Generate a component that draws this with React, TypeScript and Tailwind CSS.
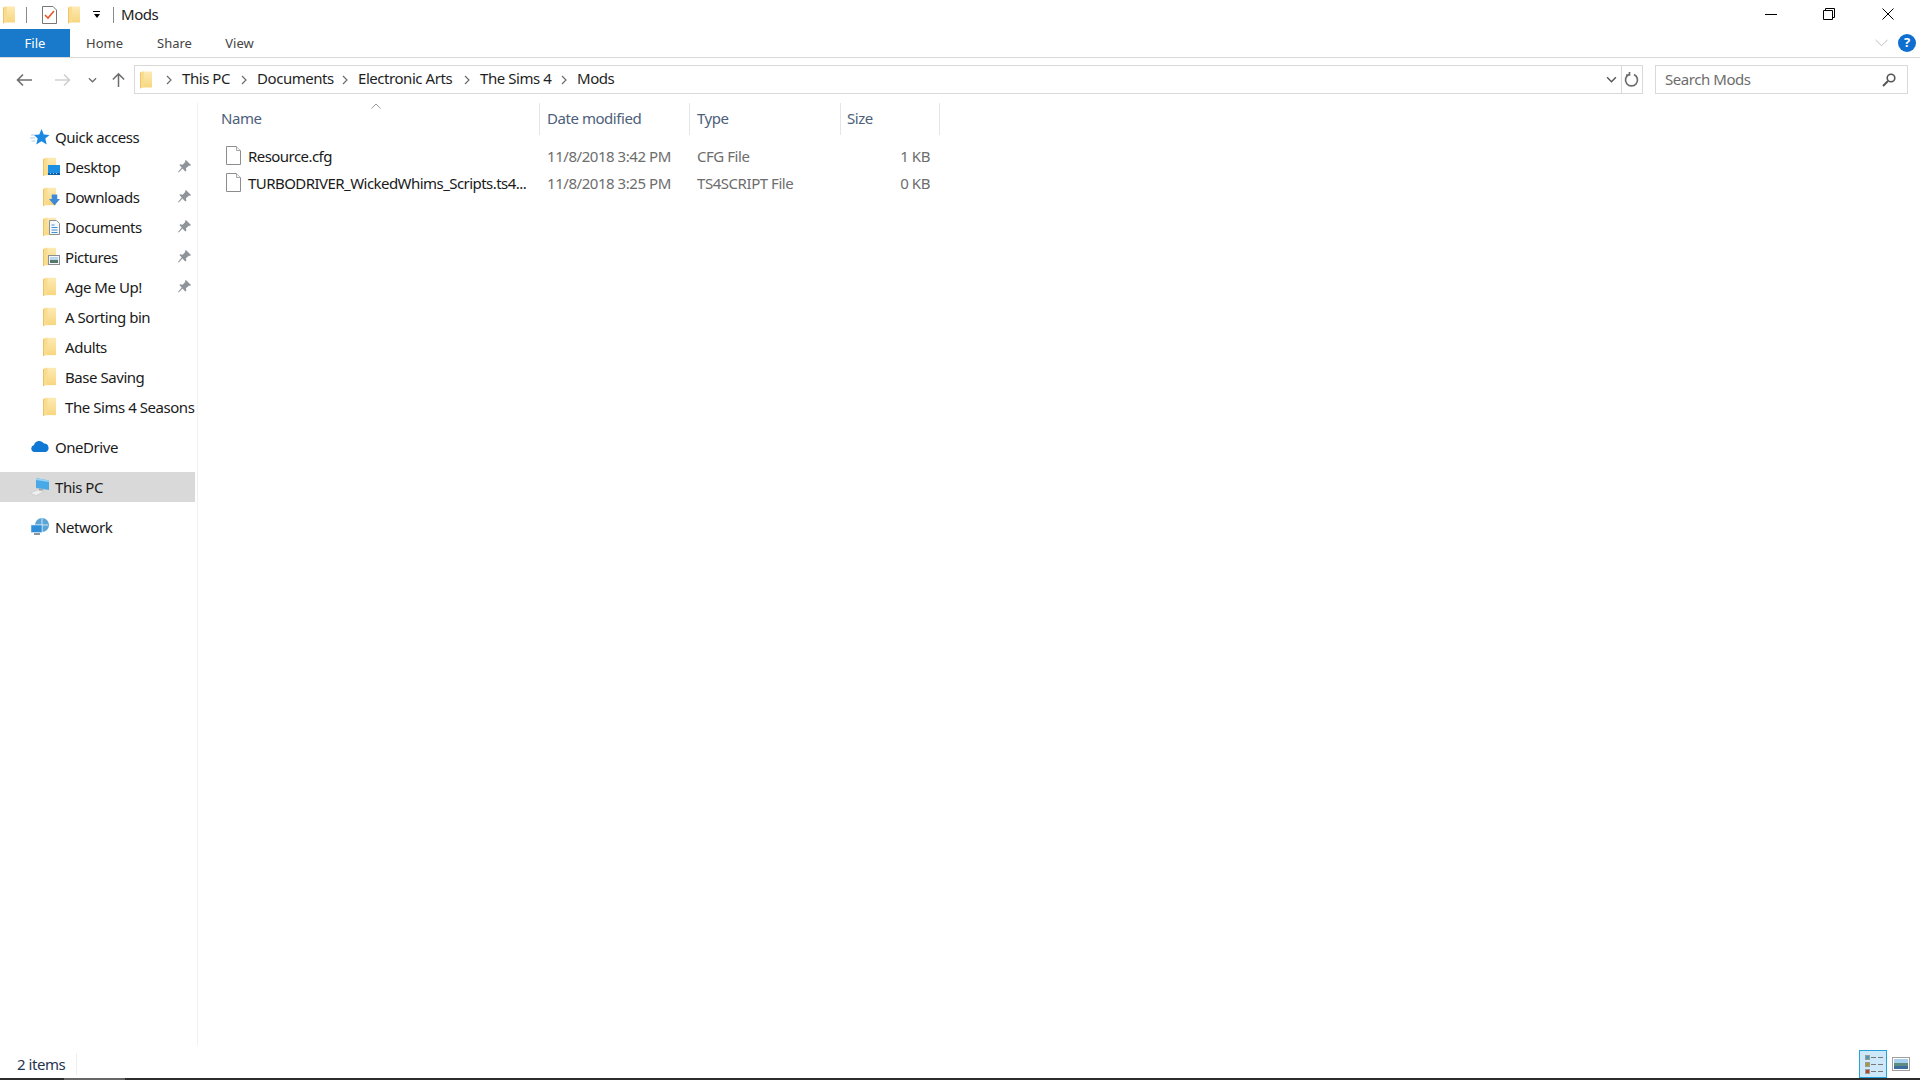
import React from "react";

const Folder = ({ className = "" }: { className?: string }) => (
  <svg viewBox="0 0 12 18" className={className}>
    <defs>
      <linearGradient id="fg" x1="0" y1="0" x2="0" y2="1">
        <stop offset="0" stopColor="#fdeab4" />
        <stop offset="1" stopColor="#f7d67f" />
      </linearGradient>
    </defs>
    <path d="M1 .5h11V16.500H1Z" fill="url(#fg)" />
    <path d="M0 1.500 4 .5V15.800L0 17.500Z" fill="#f9dc8e" />
    <path d="M0 1.500h.7V17.200L0 17.500Z" fill="#e7b95a" />
  </svg>
);

const FolderWith = ({ kind }: { kind: string }) => (
  <span className="relative block w-[17px] h-[20px]">
    <Folder className="w-[13px] h-[20px]" />
    {kind === "desktop" && (
      <svg viewBox="0 0 12 10" className="absolute left-[5px] top-[8px] w-[12px] h-[10px]">
        <rect x="0" y="0" width="12" height="9" fill="#1a8fe3" />
        <rect x="0" y="8" width="12" height="2" fill="#0b5fa8" />
        <path d="M2 8.500h1M5 8.500h1M8 8.500h1" stroke="#fff" strokeWidth=".7" />
      </svg>
    )}
    {kind === "downloads" && (
      <svg viewBox="0 0 12 12" className="absolute left-[6px] top-[7px] w-[11px] h-[12px]">
        <path d="M3 0h6v5h3l-6 7-6-7h3Z" fill="#3e8ad6" />
      </svg>
    )}
    {kind === "documents" && (
      <svg viewBox="0 0 11 15" className="absolute left-[6px] top-[3px] w-[11px] h-[15px]">
        <path d="M.5.5h7l3 3v11H.5Z" fill="#f6f8fa" stroke="#8a8f94" />
        <path d="M2.500 5h3M2.500 7.500h6M2.500 10h6M2.500 12.500h6" stroke="#3d8fd6" />
      </svg>
    )}
    {kind === "pictures" && (
      <svg viewBox="0 0 12 10" className="absolute left-[5px] top-[8px] w-[12px] h-[10px]">
        <rect x=".5" y=".5" width="11" height="9" fill="#f3f5f7" stroke="#8a8f94" />
        <rect x="2" y="2" width="8" height="3" fill="#b9d6ee" />
        <rect x="2" y="5" width="8" height="3" fill="#55786a" />
      </svg>
    )}
  </span>
);

const Pin = () => (
  <svg viewBox="0 0 14 14" className="w-[13px] h-[13px]">
    <path d="M8.500 0 14 5.500 12.800 6.500 12 6 8.500 9 9 11.500 7.800 12.500 4.800 9.200.8 13.500 0 13l4-5L1.500 5.500 2.500 4.500 5 5 8 1.800 7.500 1Z" fill="#8e9499" />
  </svg>
);

const FileIcon = () => (
  <svg viewBox="0 0 15 19" className="w-[15px] h-[19px] -mt-[2px]">
    <path d="M.5.5h10l4 4v14H.5Z" fill="#fff" stroke="#8d8d8d" />
    <path d="M10.500.5v4h4" fill="#f3f3f3" stroke="#a8a8a8" />
  </svg>
);

const Star = () => (
  <svg viewBox="0 0 20 16" className="w-[20px] h-[16px] -mt-[1px]">
    <path d="M11.500 0l2.300 5.500 5.700.5-4.200 3.600 1.400 5.900-5.200-3.200-5.200 3.200 1.400-5.900L4 6l5.300-.5Z" fill="#1b88e2" />
    <path d="M1 6h4M0 9h5M1.500 12h3.500" stroke="#a9cdee" strokeWidth="1" />
  </svg>
);

const Cloud = () => (
  <svg viewBox="0 0 18 12" className="w-[18px] h-[12px] ml-[1px] -mt-[3px]">
    <path d="M3.500 12a3.500 3.500 0 0 1-.5-6.900A5.500 5.500 0 0 1 13 3.600a4.300 4.300 0 0 1 1.500 8.400Z" fill="#0f78d4" />
  </svg>
);

const Pc = () => (
  <svg viewBox="0 0 20 18" className="w-[20px] h-[18px]">
    <path d="M6 0l13 2.500V12L6 10Z" fill="#49a9e6" />
    <path d="M6 0l13 2.500V4L6 2Z" fill="#9ad4f5" />
    <path d="M0 15l8-3 6 1.500-8 4Z" fill="#f0f0f0" stroke="#c4c4c4" strokeWidth=".5" />
    <path d="M9 10.500h4v2H9z" fill="#a4a8ac" />
  </svg>
);

const Net = () => (
  <svg viewBox="0 0 18 18" className="w-[18px] h-[18px] ml-[1px] -mt-[1px]">
    <circle cx="11" cy="7" r="7" fill="#5aa5d6" />
    <path d="M5 7h12M11 0v14" stroke="#cfe6f5" strokeWidth="1" />
    <rect x="0" y="7" width="11" height="7.500" fill="#2e8fd8" stroke="#d0e8f7" strokeWidth=".6" />
    <rect x="3" y="15" width="6" height="2" fill="#8e9499" />
  </svg>
);

const Check = () => (
  <svg viewBox="0 0 15 18" className="w-[15px] h-[18px]">
    <path d="M.5.5h10.500l3.500 3.500v13.500H.5Z" fill="#fff" stroke="#777" />
    <path d="M3 9l3 3 6-7" fill="none" stroke="#e8562a" strokeWidth="1.600" />
  </svg>
);

const Chev = ({ className = "" }: { className?: string }) => (
  <svg viewBox="0 0 6 10" className={`w-[6px] h-[10px] shrink-0 ${className}`}>
    <path d="M1 1l4 4-4 4" fill="none" stroke="#6d6d6d" strokeWidth="1.200" />
  </svg>
);

const crumbs: [string, string][] = [
  ["This PC", "w-[59px]"],
  ["Documents", "w-[85px]"],
  ["Electronic Arts", "w-[106px]"],
  ["The Sims 4", "w-[81px]"],
];

const Crumb = ({ label, w }: { label: string; w: string }) => (
  <span className={`flex items-center ${w} shrink-0`}>
    <span className="whitespace-nowrap">{label}</span>
  </span>
);

const quick: [string, string, boolean][] = [
  ["Desktop", "desktop", true],
  ["Downloads", "downloads", true],
  ["Documents", "documents", true],
  ["Pictures", "pictures", true],
  ["Age Me Up!", "plain", true],
  ["A Sorting bin", "plain", false],
  ["Adults", "plain", false],
  ["Base Saving", "plain", false],
  ["The Sims 4 Seasons", "plain", false],
];

const Root = ({ icon, label, active = false, mt = "" }: { icon: React.ReactNode; label: string; active?: boolean; mt?: string }) => (
  <div className={`flex items-center h-[30px] ${mt} ${active ? "bg-[#d9d9d9]" : ""}`}>
    <span className="w-[55px] pl-[30px] flex justify-start shrink-0">{icon}</span>
    <span>{label}</span>
  </div>
);

const Header = ({ label, w }: { label: string; w: string }) => (
  <div className={`${w} h-[32px] pb-[2px] flex items-center border-r border-[#e5e5e5] text-[#4c607a] shrink-0`}>
    {label}
  </div>
);

const FileRow = ({ name, date, type, size }: { name: string; date: string; type: string; size: string }) => (
  <div className="flex items-center h-[27px]">
    <div className="w-[340px] flex items-center shrink-0 pl-[26px]">
      <span className="w-[22px] shrink-0 flex"><FileIcon /></span>
      <span className="text-[#1a1a1a] tracking-[-0.55px] whitespace-nowrap">{name}</span>
    </div>
    <div className="w-[150px] pl-[7px] text-[#6d6d6d] shrink-0 whitespace-nowrap">{date}</div>
    <div className="w-[150px] pl-[7px] text-[#6d6d6d] shrink-0 whitespace-nowrap">{type}</div>
    <div className="w-[99px] pr-[9px] text-right text-[#6d6d6d] shrink-0">{size}</div>
  </div>
);

export default function App() {
  return (
    <div className="w-[1920px] h-[1080px] overflow-hidden flex flex-col bg-white text-[15px] tracking-[-0.45px] text-[#1a1a1a] font-['Noto_Sans','Open_Sans',sans-serif]">
      {/* Title bar */}
      <div className="h-[29px] flex items-center shrink-0 pl-[3px]">
        <Folder className="w-[12px] h-[18px]" />
        <div className="w-px h-[16px] bg-[#8a8a8a] ml-[11px]" />
        <span className="ml-[15px] flex"><Check /></span>
        <Folder className="w-[12px] h-[18px] ml-[11px]" />
        <span className="ml-[13px] flex flex-col items-center gap-[2px]">
          <span className="w-[7px] h-px bg-black" />
          <span className="w-0 h-0 border-x-[3.5px] border-x-transparent border-t-[4px] border-t-black" />
        </span>
        <div className="w-px h-[16px] bg-[#8a8a8a] ml-[13px]" />
        <span className="ml-[7px] text-[15px] text-[#222]">Mods</span>
        <div className="ml-auto flex items-center h-full">
          <svg viewBox="0 0 12 12" className="w-[12px] h-[12px] mr-[46px] -mt-[1px]"><path d="M0 6.500h12" stroke="#000" /></svg>
          <svg viewBox="0 0 12 12" className="w-[12px] h-[12px] mr-[47px] -mt-[1px]">
            <path d="M.5 2.500h9v9h-9zM2.500 2.500v-2h9v9h-2" fill="none" stroke="#000" />
          </svg>
          <svg viewBox="0 0 12 12" className="w-[12px] h-[12px] mr-[26px] -mt-[1px]"><path d="M.5.5l11 11M11.500.5l-11 11" stroke="#000" /></svg>
        </div>
      </div>

      {/* Ribbon tabs */}
      <div className="h-[29px] flex items-stretch shrink-0 border-b border-[#d9d9d9] text-[13px] tracking-normal text-[#444]">
        <div className="w-[70px] bg-[#1979ca] text-white flex items-center justify-center pt-[1px]">File</div>
        <div className="w-[69px] flex items-center justify-center pt-[1px]">Home</div>
        <div className="w-[71px] flex items-center justify-center pt-[1px]">Share</div>
        <div className="w-[59px] flex items-center justify-center pt-[1px]">View</div>
        <div className="ml-auto flex items-center pr-[4px]">
          <svg viewBox="0 0 14 8" className="w-[13px] h-[8px] mr-[10px]"><path d="M.5.5 7 7 13.500.5" fill="none" stroke="#b9b9b9" /></svg>
          <span className="w-[18px] h-[18px] rounded-full bg-[#0f6fd0] text-white text-[13px] font-bold flex items-center justify-center">?</span>
        </div>
      </div>

      {/* Address row */}
      <div className="h-[45px] pt-[7px] pb-[9px] flex items-stretch shrink-0">
        <div className="w-[134px] flex items-center shrink-0 relative">
          <svg viewBox="0 0 16 14" className="w-[16px] h-[14px] ml-[16px]"><path d="M16 7H2M7 1.500 1.500 7 7 12.500" fill="none" stroke="#6d6d6d" strokeWidth="1.600" /></svg>
          <svg viewBox="0 0 16 14" className="w-[16px] h-[14px] ml-[23px]"><path d="M0 7h14M9 1.500 14.500 7 9 12.500" fill="none" stroke="#cfcfcf" strokeWidth="1.600" /></svg>
          <svg viewBox="0 0 10 6" className="w-[9px] h-[6px] ml-[17px]"><path d="M1 1l4 4 4-4" fill="none" stroke="#6d6d6d" strokeWidth="1.400" /></svg>
          <svg viewBox="0 0 16 16" className="w-[15px] h-[15px] ml-[14px]"><path d="M8 16V2M2 8l6-6 6 6" fill="none" stroke="#6d6d6d" strokeWidth="1.600" /></svg>
        </div>
        <div className="w-[1509px] border border-[#d9d9d9] flex items-center shrink-0 text-[#1f1f1f]">
          <Folder className="w-[12px] h-[18px] ml-[5px]" />
          <Chev className="ml-[14px] mr-[10px]" />
          <div className="flex items-center pb-[2px]">
            {crumbs.map(([l, w]) => (
              <React.Fragment key={l}>
                <Crumb label={l} w={w} />
                <Chev className="mr-[10px] mt-[2px]" />
              </React.Fragment>
            ))}
            <span>Mods</span>
          </div>
          <div className="ml-auto flex items-stretch h-full">
            <div className="w-[21px] border-r border-[#d9d9d9] flex items-center justify-center">
              <svg viewBox="0 0 10 6" className="w-[11px] h-[7px]"><path d="M1 1l4 4 4-4" fill="none" stroke="#555" strokeWidth="1.300" /></svg>
            </div>
            <div className="w-[20px] flex items-center justify-center">
              <svg viewBox="0 0 16 16" className="w-[16px] h-[16px]"><path d="M5 2.500a6 6 0 1 0 5 0M5.500 0v3H2" fill="none" stroke="#6d6d6d" strokeWidth="1.700" /></svg>
            </div>
          </div>
        </div>
        <div className="ml-[12px] w-[253px] border border-[#d9d9d9] flex items-center justify-between pl-[9px] pr-[11px] text-[#6d6d6d] shrink-0">
          <span className="pb-[1px]">Search Mods</span>
          <svg viewBox="0 0 14 14" className="w-[14px] h-[14px]"><circle cx="9" cy="5" r="3.800" fill="none" stroke="#555" strokeWidth="1.600" /><path d="M6 8l-5 5" stroke="#555" strokeWidth="2" /></svg>
        </div>
      </div>

      {/* Body */}
      <div className="flex-1 min-h-0 flex">
        <aside className="w-[198px] shrink-0 border-r border-[#f0f0f0] pr-[2px] pt-[19px] mb-[5px]">
          <Root icon={<Star />} label="Quick access" />
          {quick.map(([label, kind, pinned]) => (
            <div key={label} className="flex items-center h-[30px] relative">
              <span className="w-[65px] pl-[43px] shrink-0 flex">
                {kind === "plain" ? <Folder className="w-[13px] h-[20px]" /> : <FolderWith kind={kind} />}
              </span>
              <span className="whitespace-nowrap">{label}</span>
              {pinned && <span className="absolute left-[178px] top-[8px] flex"><Pin /></span>}
            </div>
          ))}
          <Root icon={<Cloud />} label="OneDrive" mt="mt-[10px]" />
          <Root icon={<Pc />} label="This PC" active mt="mt-[10px]" />
          <Root icon={<Net />} label="Network" mt="mt-[10px]" />
        </aside>

        <main className="flex-1 min-w-0 pl-[2px] relative">
          <span className="absolute left-[173px] top-0 flex">
            <svg viewBox="0 0 10 6" className="w-[10px] h-[6px]"><path d="M.5 5.500 5 1l4.500 4.500" fill="none" stroke="#9a9a9a" /></svg>
          </span>
          <div className="flex">
            <Header label="Name" w="w-[340px] pl-[21px]" />
            <Header label="Date modified" w="w-[150px] pl-[7px]" />
            <Header label="Type" w="w-[151px] pl-[7px]" />
            <Header label="Size" w="w-[99px] pl-[6px]" />
          </div>
          <div className="pt-[8px]">
            <FileRow name="Resource.cfg" date="11/8/2018 3:42 PM" type="CFG File" size="1 KB" />
            <FileRow name="TURBODRIVER_WickedWhims_Scripts.ts4..." date="11/8/2018 3:25 PM" type="TS4SCRIPT File" size="0 KB" />
          </div>
        </main>
      </div>

      {/* Status bar */}
      <div className="h-[28px] shrink-0 flex items-center pl-[17px] text-[#1f3550]">
        <span className="w-[60px] border-r border-[#eeeeee]">2 items</span>
        <div className="ml-auto flex items-center pr-[10px]">
          <div className="w-[28px] h-[28px] bg-[#cce8f9] border border-[#26a0da] flex flex-col justify-center gap-[2px] pl-[5px]">
            {["#4a9bb0", "#a79a2f", "#b5442d"].map((c) => (
              <span key={c} className="flex items-center gap-[1px]">
                <span className="w-[5px] h-[5px] border border-[#9a9a9a]" style={{ backgroundColor: c }} />
                <span className="w-[5px] h-px bg-[#777]" />
                <span className="w-[5px] h-px bg-[#777] ml-[1px]" />
              </span>
            ))}
          </div>
          <svg viewBox="0 0 18 14" className="w-[18px] h-[14px] ml-[5px]">
            <rect x=".5" y=".5" width="17" height="13" fill="#fff" stroke="#a0a0a0" />
            <rect x="2" y="2" width="14" height="4" fill="#a6d0ee" />
            <rect x="2" y="6" width="14" height="3" fill="#5d8b82" />
            <rect x="2" y="9" width="14" height="3" fill="#3d6d9c" />
          </svg>
        </div>
      </div>

      {/* Taskbar sliver */}
      <div className="h-[2px] shrink-0 bg-[#2d2d2d] pl-[64px]">
        <div className="w-[61px] h-full bg-[#666666]" />
      </div>
    </div>
  );
}
